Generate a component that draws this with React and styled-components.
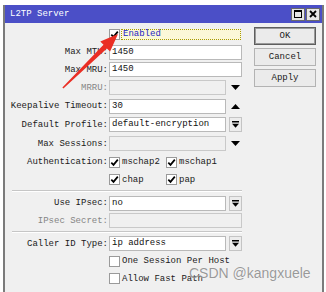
import React from 'react'
import styled, { createGlobalStyle } from 'styled-components'

const GlobalStyle = createGlobalStyle`
  html, body {
    margin: 0;
    padding: 0;
    background: #fff;
    overflow: hidden;
  }
  body {
    font-family: 'Liberation Mono', 'DejaVu Sans Mono', monospace;
    font-size: 9px;
  }
`

const Page = styled.div`
  position: relative;
  width: 326px;
  height: 292px;
  padding: 5px 0 0 3px;
  box-sizing: border-box;
  overflow: hidden;
`

const Window = styled.div`
  width: 321px;
  height: 300px;
  border-left: 2px solid #7b7b7b;
  border-right: 2px solid #7b7b7b;
  background: #f0f0f0;
  box-sizing: border-box;
`

const TitleBar = styled.div`
  height: 18px;
  background: #4b4fc7;
  color: #fff;
  display: flex;
  align-items: center;
  padding: 0 2px 0 5px;
`

const Title = styled.span`
  flex: 1;
  line-height: 18px;
`

const TitleButton = styled.div`
  width: 14px;
  height: 13px;
  box-sizing: border-box;
  border: 1px solid #6a6a6a;
  background: #e6e6e6;
  display: flex;
  align-items: center;
  justify-content: center;
  margin-left: ${(p) => (p.$gap ? '1px' : '0')};
`

const Body = styled.div`
  display: flex;
`

const Form = styled.div`
  width: 249px;
  padding-top: 2px;
`

const Row = styled.div`
  display: flex;
  align-items: center;
  height: ${(p) => p.$h || 18}px;
`

const Label = styled.div`
  width: 103px;
  flex-shrink: 0;
  margin-right: 1px;
  text-align: right;
  white-space: nowrap;
  color: ${(p) => (p.$dim ? '#858585' : '#1a1a1a')};
`

const Field = styled.div`
  width: ${(p) => p.$w || 133}px;
  height: 15px;
  box-sizing: border-box;
  border: 1px solid ${(p) => (p.$disabled ? '#c9c9c9' : '#b9b9b9')};
  background: ${(p) => (p.$disabled ? '#f0f0f0' : '#fff')};
  padding-left: 2px;
  line-height: 13px;
  color: #111;
  white-space: nowrap;
  overflow: hidden;
`

const Side = styled.div`
  width: 13px;
  height: 15px;
  margin-left: 3px;
  box-sizing: border-box;
  display: flex;
  align-items: center;
  justify-content: center;
  border: 1px solid ${(p) => (p.$boxed ? '#c4c4c4' : 'transparent')};
  background: ${(p) => (p.$boxed ? '#ececec' : 'transparent')};
`

const Box = styled.div`
  width: 11px;
  height: 11px;
  flex-shrink: 0;
  box-sizing: border-box;
  border: 1px solid #9a9a9a;
  background: #fff;
  display: flex;
  align-items: center;
  justify-content: center;
  margin-right: 2px;
`

const CheckItem = styled.div`
  display: flex;
  align-items: center;
  width: ${(p) => (p.$w ? `${p.$w}px` : 'auto')};
  color: #1a1a1a;
  white-space: nowrap;
`

const Focus = styled.div`
  width: 120px;
  height: 11px;
  box-sizing: border-box;
  border: 1px dotted #a89a00;
  background: #fbf8d8;
  color: #2525c4;
  line-height: 9px;
  padding-left: 1px;
  margin-left: -1px;
`

const Separator = styled.div`
  height: ${(p) => p.$h || 6}px;
  display: flex;
  align-items: center;
  &::after {
    content: '';
    margin-left: 7px;
    width: 230px;
    height: 0;
    border-top: 1px solid #c6c6c6;
    border-bottom: 1px solid #fff;
  }
`

const Buttons = styled.div`
  display: flex;
  flex-direction: column;
  gap: 3px;
  padding-top: 4px;
`

const Button = styled.div`
  width: 62px;
  height: 18px;
  box-sizing: border-box;
  border: 1px solid ${(p) => (p.$primary ? '#5e5e5e' : '#b3b3b3')};
  box-shadow: ${(p) => (p.$primary ? 'inset 0 0 0 1px #9a9a9a' : 'none')};
  background: #ebebeb;
  color: #1a1a1a;
  display: flex;
  align-items: center;
  justify-content: center;
`

const Arrow = styled.svg`
  position: absolute;
  left: 0;
  top: 0;
  pointer-events: none;
`

const Watermark = styled.div`
  position: absolute;
  left: 189px;
  top: 265px;
  font-family: 'Liberation Sans', Arial, sans-serif;
  font-size: 14px;
  line-height: 16px;
  color: rgba(120, 120, 120, 0.75);
  text-shadow: 0 0 1px rgba(255, 255, 255, 0.8);
  white-space: nowrap;
`

const Check = () => (
  <svg width='9' height='9' viewBox='0 0 9 9'>
    <path d='M1.3 4.6 L3.5 6.9 L7.8 1.6' fill='none' stroke='#000' strokeWidth='1.7' />
  </svg>
)

const DropIcon = () => (
  <svg width='9' height='9' viewBox='0 0 9 9'>
    <rect x='1' y='1' width='7' height='1.5' fill='#000' />
    <polygon points='1,3.8 8,3.8 4.5,7.8' fill='#000' />
  </svg>
)

const Tri = ({ up }) => (
  <svg width='9' height='5' viewBox='0 0 9 5'>
    <polygon points={up ? '0,5 9,5 4.5,0' : '0,0 9,0 4.5,5'} fill='#000' />
  </svg>
)

const CheckBox = ({ checked, children, w }) => (
  <CheckItem $w={w}>
    <Box>{checked && <Check />}</Box>
    {children}
  </CheckItem>
)

const App = () => {
  return (
    <Page>
      <GlobalStyle />
      <Window>
        <TitleBar>
          <Title>L2TP Server</Title>
          <TitleButton>
            <svg width='8' height='8' viewBox='0 0 8 8'>
              <rect x='0.5' y='0.5' width='7' height='7' fill='none' stroke='#000' />
              <rect x='0' y='0' width='8' height='2' fill='#000' />
            </svg>
          </TitleButton>
          <TitleButton $gap>
            <svg width='8' height='8' viewBox='0 0 8 8'>
              <path d='M1 1 L7 7 M7 1 L1 7' stroke='#000' strokeWidth='1.8' />
            </svg>
          </TitleButton>
        </TitleBar>
        <Body>
          <Form>
            <Row>
              <Label />
              <Box>
                <Check />
              </Box>
              <Focus>Enabled</Focus>
            </Row>
            <Row>
              <Label>Max MTU:</Label>
              <Field>1450</Field>
            </Row>
            <Row $h={17}>
              <Label>Max MRU:</Label>
              <Field>1450</Field>
            </Row>
            <Row $h={19}>
              <Label $dim>MRRU:</Label>
              <Field $w={117} $disabled />
              <Side>
                <Tri />
              </Side>
            </Row>
            <Row>
              <Label>Keepalive Timeout:</Label>
              <Field $w={117}>30</Field>
              <Side>
                <Tri up />
              </Side>
            </Row>
            <Row $h={19}>
              <Label>Default Profile:</Label>
              <Field $w={117}>default-encryption</Field>
              <Side $boxed>
                <DropIcon />
              </Side>
            </Row>
            <Row $h={19}>
              <Label>Max Sessions:</Label>
              <Field $w={117} $disabled />
              <Side>
                <Tri />
              </Side>
            </Row>
            <Row>
              <Label>Authentication:</Label>
              <CheckBox checked w={57}>
                mschap2
              </CheckBox>
              <CheckBox checked>mschap1</CheckBox>
            </Row>
            <Row $h={17}>
              <Label />
              <CheckBox checked w={57}>
                chap
              </CheckBox>
              <CheckBox checked>pap</CheckBox>
            </Row>
            <Separator />
            <Row>
              <Label>Use IPsec:</Label>
              <Field $w={117}>no</Field>
              <Side $boxed>
                <DropIcon />
              </Side>
            </Row>
            <Row $h={17}>
              <Label $dim>IPsec Secret:</Label>
              <Field $disabled />
            </Row>
            <Separator />
            <Row $h={17}>
              <Label>Caller ID Type:</Label>
              <Field $w={117}>ip address</Field>
              <Side $boxed>
                <DropIcon />
              </Side>
            </Row>
            <Row>
              <Label />
              <CheckBox>One Session Per Host</CheckBox>
            </Row>
            <Row $h={17}>
              <Label />
              <CheckBox>Allow Fast Path</CheckBox>
            </Row>
          </Form>
          <Buttons>
            <Button $primary>OK</Button>
            <Button>Cancel</Button>
            <Button>Apply</Button>
          </Buttons>
        </Body>
      </Window>
      <Arrow width='326' height='292' viewBox='0 0 326 292'>
        <polygon
          points='118,34 110.1,51.6 106.9,48.4 63.4,88.6 62.4,87.6 103.5,44.8 100.3,41.6'
          fill='#ea2e24'
        />
      </Arrow>
      <Watermark>CSDN @kangxuele</Watermark>
    </Page>
  )
}

export default App
